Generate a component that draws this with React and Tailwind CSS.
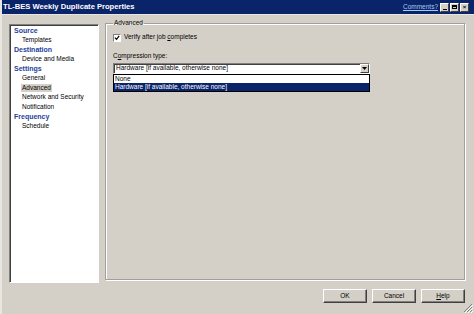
import React from "react";

const tree = [
  { label: "Source", head: true },
  { label: "Templates" },
  { label: "Destination", head: true },
  { label: "Device and Media" },
  { label: "Settings", head: true },
  { label: "General" },
  { label: "Advanced", selected: true },
  { label: "Network and Security" },
  { label: "Notification" },
  { label: "Frequency", head: true },
  { label: "Schedule" },
];

function Btn({ children }) {
  return (
    <button className="w-[44px] h-[14px] bg-[#d4d0c8] border border-t-white border-l-white border-r-[#404040] border-b-[#404040] shadow-[inset_-1px_-1px_0_#808080] text-[6.5px] leading-none text-black flex items-center justify-center">
      {children}
    </button>
  );
}

function CapBtn({ children }) {
  return (
    <div className="w-[9px] h-[9px] bg-[#d4d0c8] border border-t-white border-l-white border-r-[#404040] border-b-[#404040] flex items-center justify-center text-[6px] font-bold leading-none text-black">
      {children}
    </div>
  );
}

export default function App() {
  return (
    <div
      className="w-[474px] h-[314px] bg-[#d4d0c8] flex flex-col border-l-2 border-l-[#e8e6e0] relative overflow-hidden"
      style={{ fontFamily: '"Liberation Sans", Arial, sans-serif' }}
    >
      {/* title bar */}
      <div className="h-[15px] bg-[#0a246a] flex items-center pl-[1px] pr-[5px] border-b border-b-[#e8e6e0]">
        <span className="text-white font-bold text-[7.6px] leading-none">TL-BES Weekly Duplicate Properties</span>
        <span className="ml-auto text-[#a6caf0] underline text-[6.5px] leading-none mr-[2px]">Comments?</span>
        <div className="flex gap-[1px]">
          <CapBtn>
            <span className="block w-[4px] h-[1px] bg-black mt-[4px]" />
          </CapBtn>
          <CapBtn>
            <span className="block w-[5px] h-[4px] border border-black border-t-2" />
          </CapBtn>
          <CapBtn>×</CapBtn>
        </div>
      </div>

      {/* body */}
      <div className="flex gap-[6px] pt-[9px] pl-[7px] pr-[9px]">
        <div className="w-[90px] h-[259px] bg-white border border-t-[#808080] border-l-[#808080] border-r-white border-b-white shadow-[inset_1px_1px_0_#404040] pt-[1px] pl-[4px]">
          {tree.map((t) => (
            <div key={t.label} className="h-[9.5px] flex items-center">
              {t.head ? (
                <span className="text-[7px] font-bold text-[#1f3f9a] leading-none">{t.label}</span>
              ) : (
                <span
                  className={
                    "ml-[7px] text-[6.5px] leading-none text-black px-[1px] py-[1px] " +
                    (t.selected ? "bg-[#d4d0c8]" : "")
                  }
                >
                  {t.label}
                </span>
              )}
            </div>
          ))}
        </div>

        <fieldset className="flex-1 h-[260px] border border-[#a0a0a0] shadow-[inset_1px_1px_0_white,1px_1px_0_white] -mt-[4px] pl-[7px] pr-[94px]">
          <legend className="text-[6.5px] leading-none text-black px-[1px]">Advanced</legend>
          <div className="flex items-center gap-[3px] mt-[7px]">
            <div className="w-[8px] h-[8px] bg-white border border-t-[#808080] border-l-[#808080] border-r-white border-b-white flex items-center justify-center">
              <svg width="6" height="6" viewBox="0 0 7 7">
                <path d="M1 3 L3 5 L6 1" stroke="black" strokeWidth="1.4" fill="none" />
              </svg>
            </div>
            <span className="text-[6.5px] leading-none text-black">
              Verify after job <span className="underline">c</span>ompletes
            </span>
          </div>
          <div className="text-[6.5px] leading-none text-black mt-[11px]">
            C<span className="underline">o</span>mpression type:
          </div>
          <div className="relative mt-[4px]">
            <div className="h-[11px] bg-white border border-t-[#808080] border-l-[#808080] border-r-white border-b-white shadow-[inset_1px_1px_0_#404040] flex items-center pl-[2px]">
              <span className="text-[6.5px] leading-none text-black">Hardware [if available, otherwise none]</span>
              <div className="ml-auto w-[9px] h-[9px] bg-[#d4d0c8] border border-t-white border-l-white border-r-[#404040] border-b-[#404040] flex items-center justify-center">
                <svg width="5" height="3" viewBox="0 0 5 3">
                  <path d="M0 0 H5 L2.5 3 Z" fill="black" />
                </svg>
              </div>
            </div>
            <div className="absolute left-0 right-0 top-[11px] bg-white border border-black">
              <div className="h-[8px] flex items-center pl-[1px] text-[6.5px] leading-none text-black">None</div>
              <div className="h-[8px] flex items-center pl-[1px] text-[6.5px] leading-none text-white bg-[#0a246a]">
                Hardware [if available, otherwise none]
              </div>
            </div>
          </div>
        </fieldset>
      </div>

      {/* buttons */}
      <div className="flex justify-end gap-[5px] pr-[9px] mt-[6px]">
        <Btn>OK</Btn>
        <Btn>Cancel</Btn>
        <Btn>
          <span className="underline">H</span>elp
        </Btn>
      </div>

      <svg className="absolute right-[1px] bottom-[1px]" width="10" height="10" viewBox="0 0 10 10">
        <path d="M9 1 L1 9 M9 4 L4 9 M9 7 L7 9" stroke="#808080" strokeWidth="1" />
        <path d="M10 2 L2 10 M10 5 L5 10 M10 8 L8 10" stroke="white" strokeWidth="1" />
      </svg>
    </div>
  );
}
